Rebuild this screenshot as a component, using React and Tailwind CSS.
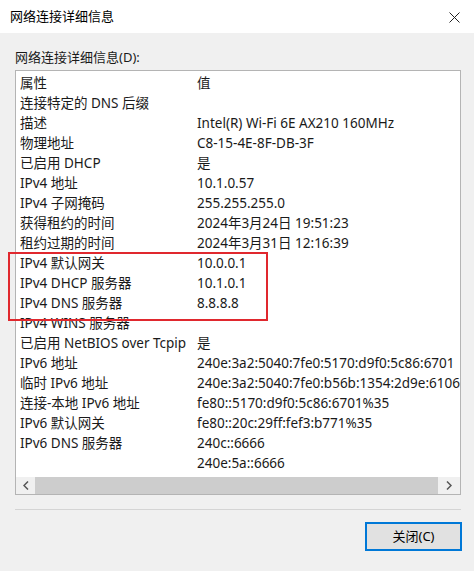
const ROWS = [
  ['连接特定的 DNS 后缀', ''],
  ['描述', 'Intel(R) Wi-Fi 6E AX210 160MHz'],
  ['物理地址', 'C8-15-4E-8F-DB-3F'],
  ['已启用 DHCP', '是'],
  ['IPv4 地址', '10.1.0.57'],
  ['IPv4 子网掩码', '255.255.255.0'],
  ['获得租约的时间', '2024年3月24日 19:51:23'],
  ['租约过期的时间', '2024年3月31日 12:16:39'],
  ['IPv4 默认网关', '10.0.0.1'],
  ['IPv4 DHCP 服务器', '10.1.0.1'],
  ['IPv4 DNS 服务器', '8.8.8.8'],
  ['IPv4 WINS 服务器', ''],
  ['已启用 NetBIOS over Tcpip', '是'],
  ['IPv6 地址', '240e:3a2:5040:7fe0:5170:d9f0:5c86:6701'],
  ['临时 IPv6 地址', '240e:3a2:5040:7fe0:b56b:1354:2d9e:6106'],
  ['连接-本地 IPv6 地址', 'fe80::5170:d9f0:5c86:6701%35'],
  ['IPv6 默认网关', 'fe80::20c:29ff:fef3:b771%35'],
  ['IPv6 DNS 服务器', '240c::6666'],
  ['', '240e:5a::6666'],
];

const Row = ({ name, value }) => (
  <div className="flex h-[20px] items-center whitespace-nowrap">
    <span className="w-[177px] shrink-0">{name}</span>
    <span>{value}</span>
  </div>
);

export default function App() {
  return (
    <div
      className="relative w-[474px] h-[571px] overflow-hidden bg-[#f0f0f0] text-[13px] text-[#1a1a1a]"
      style={{ fontFamily: '"Noto Sans", "Noto Sans CJK SC", sans-serif' }}
    >
      {/* title bar */}
      <div className="flex h-[33px] items-center justify-between bg-white pl-[10px] pr-[14px]">
        <span className="text-black">网络连接详细信息</span>
        <svg width="11" height="11" viewBox="0 0 11 11" className="mt-[2px]">
          <path d="M0.5 0.5 L10.5 10.5 M10.5 0.5 L0.5 10.5" stroke="#222" strokeWidth="1" fill="none" />
        </svg>
      </div>

      <div className="pl-[15px] pr-[13px]">
        <div className="mt-[15px] h-[18px] leading-[18px]">网络连接详细信息(D):</div>

        {/* list view */}
        <div className="mt-[4px] flex h-[425px] flex-col border border-[#b4b4b4] bg-white">
          <div className="flex-1 overflow-hidden pl-[4px] pt-[2px] text-[13.5px]">
            <Row name="属性" value="值" />
            {ROWS.map(([n, v], i) => (
              <Row key={i} name={n} value={v} />
            ))}
          </div>
          {/* horizontal scrollbar */}
          <div className="flex h-[17px] bg-[#f0f0f0]">
            <div className="flex w-[19px] items-center justify-center">
              <svg width="6" height="9" viewBox="0 0 6 9">
                <path d="M5 0.5 L1 4.5 L5 8.5" stroke="#555" strokeWidth="1.5" fill="none" />
              </svg>
            </div>
            <div className="w-[403px] bg-[#cdcdcd]" />
            <div className="flex flex-1 items-center justify-center">
              <svg width="6" height="9" viewBox="0 0 6 9">
                <path d="M1 0.5 L5 4.5 L1 8.5" stroke="#555" strokeWidth="1.5" fill="none" />
              </svg>
            </div>
          </div>
        </div>

        <div className="mt-[14px] h-px bg-[#d4d4d4]" />

        <div className="mt-[12px] flex justify-end">
          <button className="-mr-px h-[29px] w-[97px] border-2 border-[#0078d7] bg-[#e1e1e1] text-[13px] text-black">
            关闭(C)
          </button>
        </div>
      </div>

      {/* annotation */}
      <div className="absolute left-[8px] top-[252px] h-[69px] w-[260px] border-2 border-[#e0282e]" />
    </div>
  );
}
